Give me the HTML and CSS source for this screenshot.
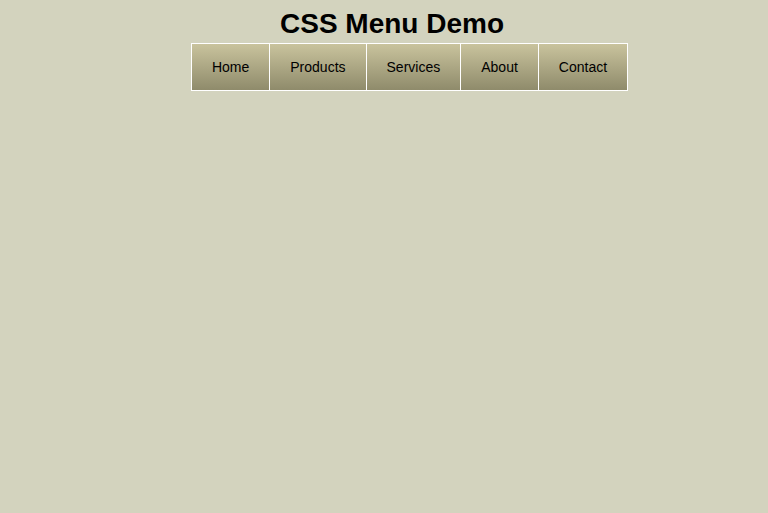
FILE: index.html
```html
<!DOCTYPE html>
<html lang="en">
<head>
  <meta charset="UTF-8" />
  <meta name="viewport" content="width=device-width, initial-scale=1.0"/>
  <title>CSS Menu Demo</title>
  <link rel="stylesheet" href="styles.css">
</head>
<body>
  <h1>CSS Menu Demo</h1>

  <nav class="menu-bar">
    <ul class="menu">
      <li><a href="#">Home</a></li>
      <li><a href="#">Products</a></li>
      <li><a href="#">Services</a></li>
      <li><a href="#">About</a></li>
      <li><a href="#">Contact</a></li>
    </ul>
  </nav>
</body>
</html>
```

FILE: styles.css
```css
body {
  font-family: "Liberation Sans", Arial, sans-serif;
  background: #d3d3be;
  color: #000;
  margin: 8px;
}
h1 {
  font-size: 28px;
  text-align: center;
  margin: 0 0 3px;
  padding-left: 16px;
  line-height: 32px;
}
.menu-bar {
  display: flex;
  justify-content: center;
  padding-left: 51px;
}
.menu {
  display: flex;
  list-style: none;
  margin: 0;
  padding: 0;
  border: 1px solid #fff;
}
.menu li + li {
  border-left: 1px solid #fff;
}
.menu a {
  display: block;
  padding: 15px 20px;
  font-size: 14px;
  line-height: 16px;
  color: #000;
  text-decoration: none;
  background: linear-gradient(to bottom, #c9c39d, #8f8b6b);
}
.menu a:hover {
  background: linear-gradient(to bottom, #d8d3b0, #a09b7b);
}
```
